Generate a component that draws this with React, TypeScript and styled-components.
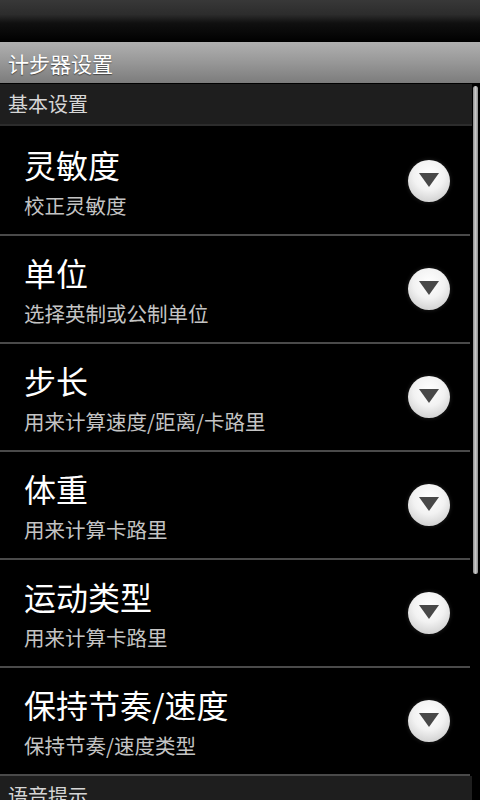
import React from "react";
import styled, { createGlobalStyle } from "styled-components";

interface Setting {
  title: string;
  summary: string;
}

const settings: Setting[] = [
  { title: "灵敏度", summary: "校正灵敏度" },
  { title: "单位", summary: "选择英制或公制单位" },
  { title: "步长", summary: "用来计算速度/距离/卡路里" },
  { title: "体重", summary: "用来计算卡路里" },
  { title: "运动类型", summary: "用来计算卡路里" },
  { title: "保持节奏/速度", summary: "保持节奏/速度类型" },
];

const GlobalStyle = createGlobalStyle`
  html, body {
    margin: 0;
    padding: 0;
    background: #000000;
  }
  body {
    font-family: "Noto Sans CJK SC", "Noto Sans", sans-serif;
    overflow: hidden;
  }
`;

const Screen = styled.div`
  width: 480px;
  height: 800px;
  overflow: hidden;
  display: flex;
  flex-direction: column;
  background: #000000;
`;

const StatusBar = styled.div`
  height: 42px;
  flex-shrink: 0;
  background: linear-gradient(
    to bottom,
    #383838 0%,
    #2c2c2c 35%,
    #101010 55%,
    #000000 100%
  );
`;

const TitleBar = styled.div`
  height: 41px;
  flex-shrink: 0;
  display: flex;
  align-items: center;
  padding-left: 8px;
  color: #ffffff;
  font-size: 21px;
  text-shadow: 0 1px 1px rgba(0, 0, 0, 0.5);
  background: linear-gradient(to bottom, #b0b0b0 0%, #979797 50%, #7c7c7c 100%);
  border-bottom: 1px solid #000000;
`;

const ListArea = styled.div`
  position: relative;
  flex: 1;
  overflow: hidden;
`;

const CategoryHeader = styled.div`
  width: 472px;
  height: 42px;
  box-sizing: border-box;
  display: flex;
  align-items: center;
  padding: 0 0 2px 8px;
  margin-bottom: 2px;
  color: #d6d6d6;
  font-size: 20px;
  background: #1e1e1e;
  border-bottom: 2px solid #2c2c2c;
`;

const Row = styled.div`
  width: 470px;
  height: 108px;
  box-sizing: border-box;
  display: flex;
  align-items: center;
  padding: 0 20px 0 24px;
  border-bottom: 2px solid #4a4a4a;
`;

const TextBlock = styled.div`
  flex: 1;
  display: flex;
  flex-direction: column;
  gap: 10px;
`;

const Title = styled.div`
  color: #ffffff;
  font-size: 32px;
  line-height: 38px;
`;

const Summary = styled.div`
  color: #c4c4c4;
  font-size: 20.5px;
  line-height: 24px;
`;

const DropButton = styled.div`
  width: 42px;
  height: 42px;
  border-radius: 50%;
  flex-shrink: 0;
  display: flex;
  align-items: center;
  justify-content: center;
  background: radial-gradient(
    circle at 50% 35%,
    #ffffff 0%,
    #f2f2f2 45%,
    #d2d2d2 80%,
    #a8a8a8 100%
  );
  box-shadow: 0 0 4px rgba(255, 255, 255, 0.15);
`;

const ScrollThumb = styled.div`
  position: absolute;
  top: 2px;
  right: 2px;
  width: 5px;
  height: 488px;
  border-radius: 3px;
  background: linear-gradient(to right, #8c8c8c, #c8c8c8 50%, #8c8c8c);
`;

const Arrow = () => (
  <svg width="22" height="16" viewBox="0 0 22 16" style={{ marginTop: -3 }}>
    <polygon points="1,1 21,1 11,15" fill="#484848" />
  </svg>
);

export default function App() {
  return (
    <Screen>
      <GlobalStyle />
      <StatusBar />
      <TitleBar>计步器设置</TitleBar>
      <ListArea>
        <CategoryHeader>基本设置</CategoryHeader>
        {settings.map((s) => (
          <Row key={s.title}>
            <TextBlock>
              <Title>{s.title}</Title>
              <Summary>{s.summary}</Summary>
            </TextBlock>
            <DropButton>
              <Arrow />
            </DropButton>
          </Row>
        ))}
        <CategoryHeader>语音提示</CategoryHeader>
        <ScrollThumb />
      </ListArea>
    </Screen>
  );
}
